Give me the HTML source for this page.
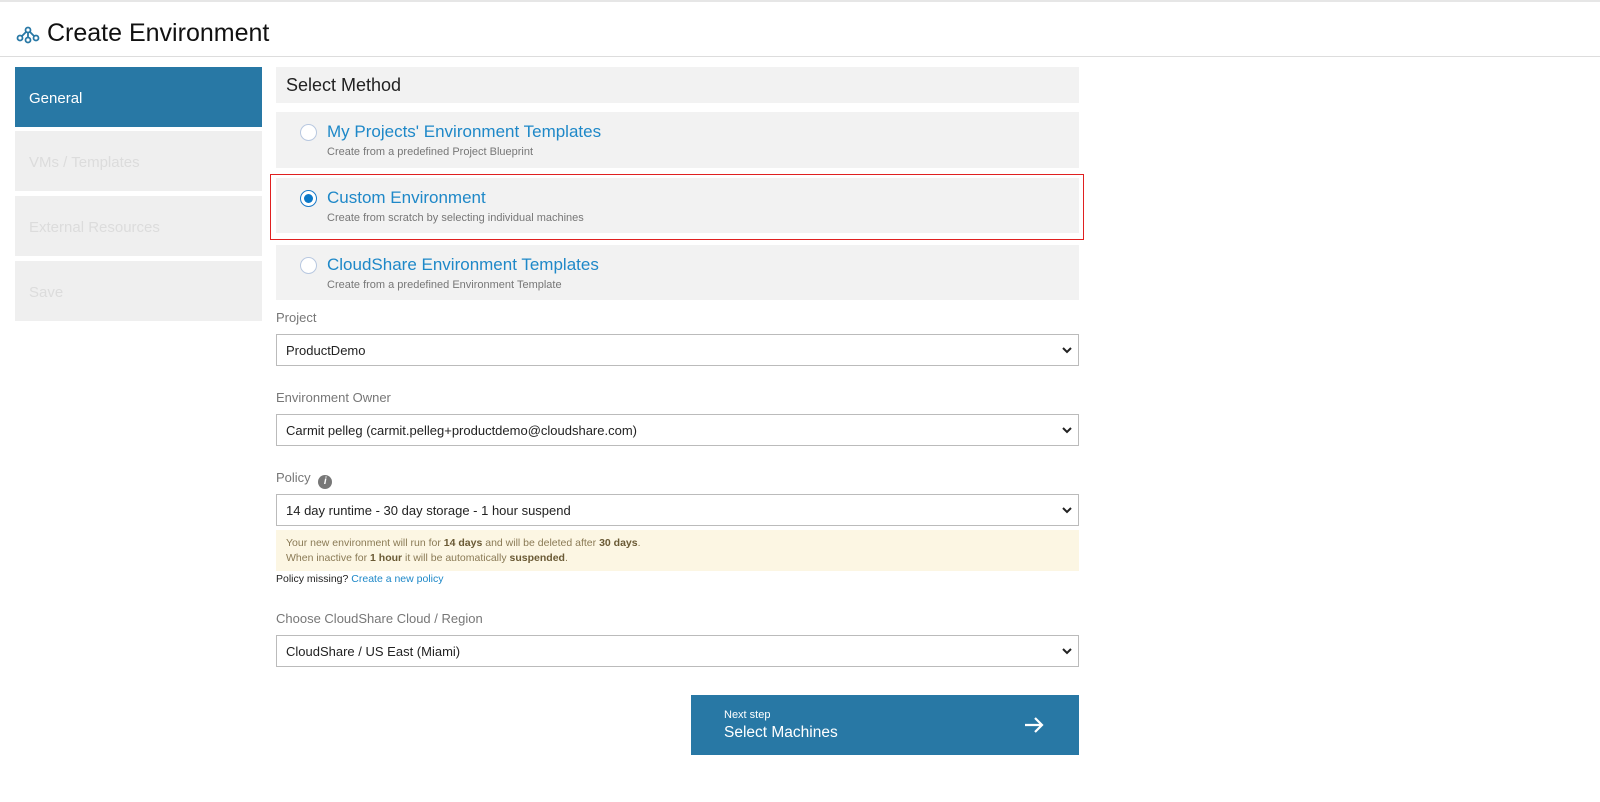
<!DOCTYPE html>
<html><head><meta charset="utf-8"><style>
*{box-sizing:border-box;margin:0;padding:0}
body{width:1600px;height:802px;background:#fff;font-family:"Liberation Sans",sans-serif;position:relative;overflow:hidden;color:#333}
.a{position:absolute}
.top{left:0;top:0;width:1600px;height:2px;background:#e6e6e6}
.hl{left:0;top:56px;width:1600px;height:1px;background:#ddd}
.title{left:47px;top:19px;font-size:25px;color:#111}
.nav{left:15px;width:247px;height:60px;background:#efefef;color:#dcdcdc;font-size:15px;padding:23px 0 0 14px}
.nav.on{background:#2878a5;color:#fff}
.sec{left:276px;width:803px;background:#f2f2f2}
.opt .t{position:absolute;left:51px;top:10px;font-size:17px;color:#1e88c8}
.opt .s{position:absolute;left:51px;top:34px;font-size:11px;color:#777}
.rad{position:absolute;left:24px;top:12px;width:17px;height:17px;border-radius:50%;border:1px solid #b8c8e0;background:#fff}
.rad.on{border-color:#1a7ac8}
.rad.on:after{content:"";position:absolute;left:3px;top:3px;width:9px;height:9px;border-radius:50%;background:#0a78c8}
.lbl{left:276px;font-size:13px;color:#777}
.sel{left:276px;width:803px;height:32px;border:1px solid #bbb;background:#fff;font-size:13px;color:#222;padding:8px 9px}
.sel svg{position:absolute;right:6px;top:12px}
</style></head><body>
<div class="a top"></div>
<div class="a hl"></div>
<svg class="a" style="left:16px;top:26px" width="24" height="18" viewBox="0 0 24 18"><g fill="none" stroke="#2878a5" stroke-width="1.8"><circle cx="12" cy="4" r="2.5"/><circle cx="4" cy="12" r="2.5"/><circle cx="12" cy="14" r="2.5"/><circle cx="20" cy="12" r="2.5"/><path d="M10 6L6 10M12 6.5V11.5M14 6L18 10"/></g></svg>
<div class="a title">Create Environment</div>

<div class="a nav on" style="top:67px">General</div>
<div class="a nav" style="top:131px">VMs / Templates</div>
<div class="a nav" style="top:196px">External Resources</div>
<div class="a nav" style="top:261px">Save</div>

<div class="a sec" style="top:67px;height:36px;font-size:18px;color:#222;padding:8px 10px">Select Method</div>
<div class="a sec opt" style="top:112px;height:56px"><div class="rad"></div><div class="t">My Projects' Environment Templates</div><div class="s">Create from a predefined Project Blueprint</div></div>
<div class="a" style="left:270px;top:174px;width:814px;height:66px;border:1px solid #e02020"></div>
<div class="a sec opt" style="top:178px;height:55px"><div class="rad on"></div><div class="t">Custom Environment</div><div class="s">Create from scratch by selecting individual machines</div></div>
<div class="a sec opt" style="top:245px;height:55px"><div class="rad"></div><div class="t">CloudShare Environment Templates</div><div class="s">Create from a predefined Environment Template</div></div>

<div class="a lbl" style="top:310px">Project</div>
<div class="a sel" style="top:334px">ProductDemo<svg width="10" height="7"><path d="M1 1L5 5L9 1" fill="none" stroke="#222" stroke-width="2"/></svg></div>
<div class="a lbl" style="top:390px">Environment Owner</div>
<div class="a sel" style="top:414px">Carmit pelleg (carmit.pelleg+productdemo@cloudshare.com)<svg width="10" height="7"><path d="M1 1L5 5L9 1" fill="none" stroke="#222" stroke-width="2"/></svg></div>
<div class="a lbl" style="top:470px">Policy <span style="display:inline-block;width:14px;height:14px;border-radius:50%;background:#777;color:#fff;font-size:10px;font-weight:bold;font-style:italic;text-align:center;line-height:14px;margin-left:4px;vertical-align:-2px">i</span></div>
<div class="a sel" style="top:494px">14 day runtime - 30 day storage - 1 hour suspend<svg width="10" height="7"><path d="M1 1L5 5L9 1" fill="none" stroke="#222" stroke-width="2"/></svg></div>
<div class="a" style="left:276px;top:530px;width:803px;height:41px;background:#fcf6e3;font-size:10.5px;color:#8a7a55;padding:6px 10px;line-height:15px">Your new environment will run for <b style="color:#6a5a35">14 days</b> and will be deleted after <b style="color:#6a5a35">30 days</b>.<br>When inactive for <b style="color:#6a5a35">1 hour</b> it will be automatically <b style="color:#6a5a35">suspended</b>.</div>
<div class="a" style="left:276px;top:573px;font-size:10.5px;color:#222">Policy missing? <span style="color:#1e88c8">Create a new policy</span></div>
<div class="a lbl" style="top:611px">Choose CloudShare Cloud / Region</div>
<div class="a sel" style="top:635px">CloudShare / US East (Miami)<svg width="10" height="7"><path d="M1 1L5 5L9 1" fill="none" stroke="#222" stroke-width="2"/></svg></div>

<div class="a" style="left:691px;top:695px;width:388px;height:60px;background:#2878a5;color:#fff">
<div class="a" style="left:33px;top:14px;font-size:11px">Next step</div>
<div class="a" style="left:33px;top:29px;font-size:15.5px">Select Machines</div>
<svg class="a" style="left:333px;top:21px" width="20" height="18" viewBox="0 0 20 18"><path d="M1 9H18M11 2L18 9L11 16" fill="none" stroke="#fff" stroke-width="2.2"/></svg>
</div>
</body></html>
